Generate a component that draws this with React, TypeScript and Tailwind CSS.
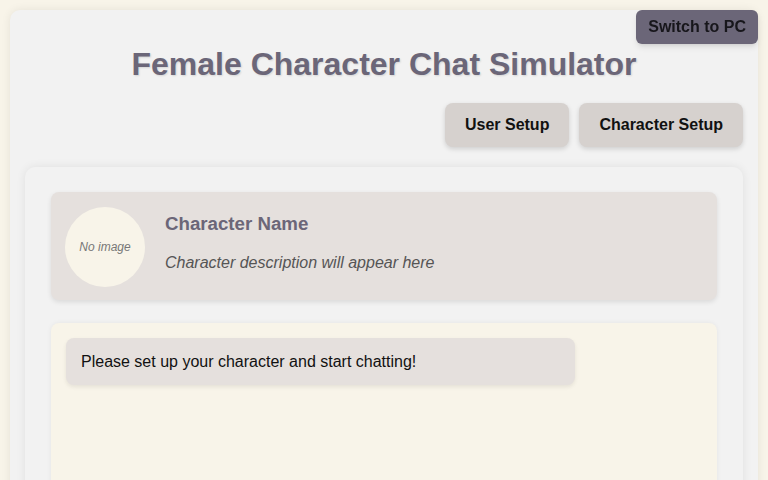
export default function App() {
  return (
    <div className="min-h-screen bg-[#f8f4e9] p-[10px] font-['Liberation_Sans',Arial,sans-serif]">
      <button className="fixed right-[10px] top-[10px] z-10 h-[34px] rounded-[6px] bg-[#6b6678] px-3 text-base font-bold text-[#17161b] shadow-md">
        Switch to PC
      </button>

      <div className="rounded-[10px] bg-[#f2f2f2] px-[15px] pb-5 pt-9 shadow-[0_0_10px_rgba(0,0,0,0.08)]">
        <h1 className="text-center text-[32px] font-bold leading-[37px] text-[#6b6678] [text-shadow:1px_1px_2px_rgba(0,0,0,0.12)]">
          Female Character Chat Simulator
        </h1>

        <div className="mt-5 flex justify-end gap-[10px]">
          <button className="h-[44px] rounded-[8px] bg-[#d6d1ce] px-5 text-base font-bold text-[#111] shadow-[0_2px_5px_rgba(0,0,0,0.15)]">
            User Setup
          </button>
          <button className="h-[44px] rounded-[8px] bg-[#d6d1ce] px-5 text-base font-bold text-[#111] shadow-[0_2px_5px_rgba(0,0,0,0.15)]">
            Character Setup
          </button>
        </div>

        <div className="mt-5 rounded-[10px] bg-[#f2f2f2] px-[26px] pb-[26px] pt-[25px] shadow-[0_0_10px_rgba(0,0,0,0.08)]">
          <div className="flex h-[108px] items-center gap-5 rounded-[8px] bg-[#e5e0dd] px-[14px] shadow-[0_2px_5px_rgba(0,0,0,0.1)]">
            <div className="mt-[2px] flex h-[80px] w-[80px] shrink-0 items-center justify-center rounded-full bg-[#f8f4e9] text-xs italic text-[#777]">
              No image
            </div>
            <div className="flex flex-col pb-[8px]">
              <h2 className="text-[18.7px] font-bold leading-[22px] text-[#6b6678]">Character Name</h2>
              <p className="mt-[19px] text-base italic leading-[18px] text-[#555]">
                Character description will appear here
              </p>
            </div>
          </div>

          <div className="mt-[23px] h-[300px] rounded-[8px] bg-[#f8f4e9] p-[15px] shadow-[0_0_5px_rgba(0,0,0,0.06)]">
            <div className="w-[80%] rounded-[8px] bg-[#e5e0dd] px-[15px] py-[14px] text-base leading-[19px] text-[#111] shadow-[0_2px_4px_rgba(0,0,0,0.08)]">
              Please set up your character and start chatting!
            </div>
          </div>
        </div>
      </div>
    </div>
  )
}
